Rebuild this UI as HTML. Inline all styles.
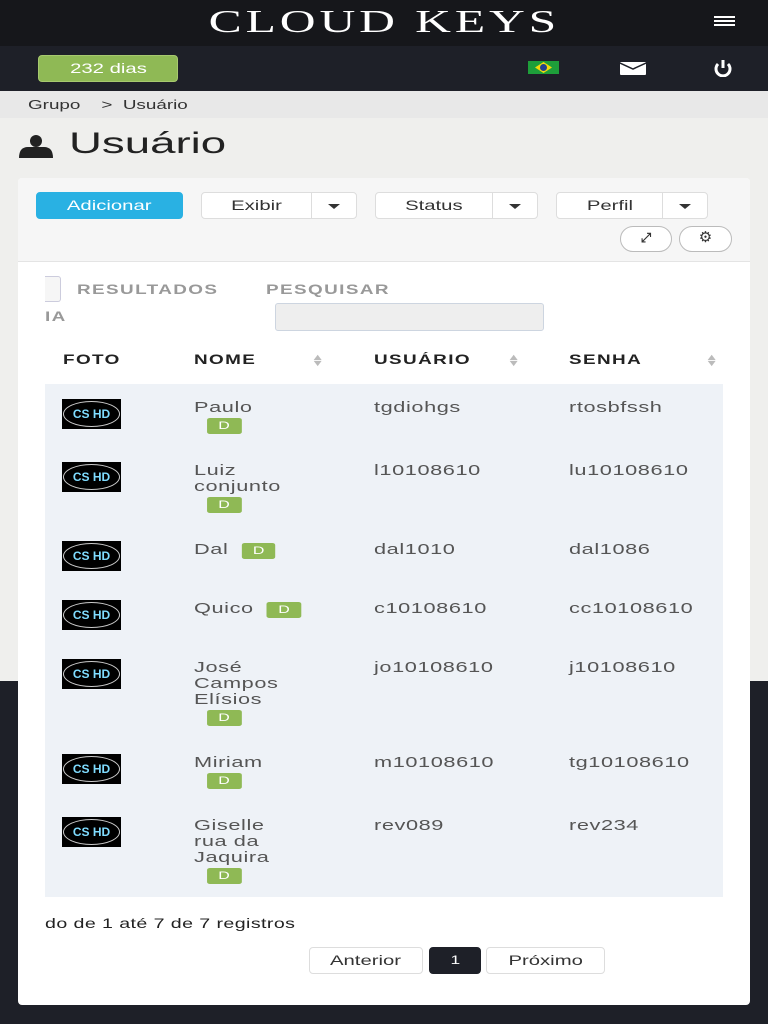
<!DOCTYPE html>
<html><head><meta charset="utf-8"><style>
*{margin:0;padding:0;box-sizing:border-box}
body{width:768px;height:1024px;position:relative;overflow:hidden;background:#1e2028;font-family:"Liberation Sans",sans-serif}
.a{position:absolute}
.sx{transform:scaleX(1.45);transform-origin:0 0}
.sc{display:inline-block;transform:scaleX(1.45);transform-origin:50% 50%}
.top{left:0;top:0;width:768px;height:46px;background:#16171b}
.logo{left:0;width:768px;top:3px;text-align:center;color:#fff;font-family:"Liberation Serif",serif;font-size:32px;letter-spacing:2.5px}
.bar2{top:46px;left:0;width:768px;height:45px;background:#1e2028}
.light{top:91px;left:0;width:768px;height:590px;background:#efefed}
.crumbbg{top:91px;left:0;width:768px;height:27px;background:#e8e8e8}
.card{left:18px;top:178px;width:732px;height:827px;background:#fff;border-radius:4px}
.cardh{left:18px;top:178px;width:732px;height:84px;background:#f6f6f6;border-bottom:1px solid #e4e4e4;border-radius:4px 4px 0 0}
.btn{border:1px solid #ddd;background:#fff;border-radius:4px;font-size:14px;color:#333;text-align:center;line-height:25px;height:27px}
.car{width:0;height:0;border-left:6px solid transparent;border-right:6px solid transparent;border-top:5px solid #333;display:inline-block;vertical-align:middle}
.th{font-size:13.5px;font-weight:bold;color:#222;letter-spacing:1px;top:352px;transform:scaleX(1.4);transform-origin:0 0}
.sort{top:354px;color:#bbb;font-size:9px;line-height:6px;transform:scaleX(1.5);transform-origin:0 0}
.t{font-size:15px;color:#555;letter-spacing:.4px;line-height:16px;transform:scaleX(1.45);transform-origin:0 0}
.b{display:inline-block;background:#8fb955;color:#fff;font-size:11px;width:23.5px;height:16px;line-height:16px;text-align:center;border-radius:2px;letter-spacing:0}
.lg{width:59px;height:30px;background:#000}
.lg div{position:absolute;left:1px;top:2px;width:57px;height:26px;border:1px solid #ccc;border-radius:50%;color:#7fdcff;font-weight:bold;font-size:12px;text-align:center;line-height:24px}
</style></head><body>
<div class="a top"></div>
<div class="a logo"><span class="sc" style="transform:scaleX(1.55)">CLOUD KEYS</span></div>
<div class="a" style="left:714px;top:16px;width:21px;height:2px;background:#fff;box-shadow:0 4px 0 #fff,0 8px 0 #fff"></div>
<div class="a bar2"></div>
<div class="a" style="left:38px;top:55px;width:140px;height:27px;background:#8fb955;border:1px solid #a7c96f;border-radius:4px;color:#fff;font-size:14px;text-align:center;line-height:25px"><span class="sc">232 dias</span></div>
<div class="a" style="left:528px;top:61px;width:31px;height:13px;background:#1e9e3a"><div class="a" style="left:7px;top:1px;width:17px;height:11px;background:#f4d90c;clip-path:polygon(50% 0,100% 50%,50% 100%,0 50%)"></div><div class="a" style="left:12px;top:3px;width:7px;height:7px;border-radius:50%;background:#23408f"></div></div>
<svg class="a" style="left:620px;top:62px" width="26" height="13" viewBox="0 0 26 13"><rect width="26" height="13" rx="1" fill="#fff"/><path d="M0 1 L13 7 L26 1" stroke="#1e2028" stroke-width="1.5" fill="none"/></svg>
<svg class="a" style="left:712px;top:59px" width="22" height="18" viewBox="0 0 22 18"><path d="M6 5 A7 7 0 1 0 16 5" stroke="#fff" stroke-width="3" fill="none"/><rect x="9.5" y="1" width="3" height="8" fill="#fff"/></svg>
<div class="a light"></div>
<div class="a crumbbg"></div>
<div class="a sx" style="left:28px;top:97px;font-size:13px;color:#333;white-space:nowrap">Grupo &nbsp;&nbsp;&nbsp;&gt; &nbsp;Usuário</div>
<svg class="a" style="left:18px;top:135px" width="38" height="23" viewBox="0 0 38 23"><circle cx="18" cy="6" r="6" fill="#222"/><path d="M1 23 Q1 12 10 12 L26 12 Q35 12 35 23 Z" fill="#222"/></svg>
<div class="a sx" style="left:69px;top:127px;font-size:30px;color:#222;transform:scaleX(1.52)">Usuário</div>
<div class="a card"></div>
<div class="a cardh"></div>
<div class="a btn" style="left:36px;top:192px;width:147px;background:#29b1e3;border-color:#29b1e3;color:#fff"><span class="sc">Adicionar</span></div>
<div class="a btn" style="left:201px;top:192px;width:111px;border-radius:4px 0 0 4px"><span class="sc">Exibir</span></div>
<div class="a btn" style="left:311px;top:192px;width:46px;border-radius:0 4px 4px 0"><span class="car"></span></div>
<div class="a btn" style="left:375px;top:192px;width:118px;border-radius:4px 0 0 4px"><span class="sc">Status</span></div>
<div class="a btn" style="left:492px;top:192px;width:46px;border-radius:0 4px 4px 0"><span class="car"></span></div>
<div class="a btn" style="left:556px;top:192px;width:107px;border-radius:4px 0 0 4px"><span class="sc">Perfil</span></div>
<div class="a btn" style="left:662px;top:192px;width:46px;border-radius:0 4px 4px 0"><span class="car"></span></div>
<div class="a btn" style="left:620px;top:226px;width:52px;height:26px;border-radius:13px;border-color:#bbb;font-size:13px;line-height:22px;font-weight:bold">⤢</div>
<div class="a btn" style="left:679px;top:226px;width:53px;height:26px;border-radius:13px;border-color:#bbb;font-size:15px;line-height:22px">⚙</div>
<div class="a" style="left:45px;top:276px;width:16px;height:26px;border:1px solid #ccd;border-left:none;border-radius:0 3px 3px 0;background:#f6f6f6"></div>
<div class="a th" style="left:77px;top:282px;color:#999">RESULTADOS</div>
<div class="a th" style="left:266px;top:282px;color:#999">PESQUISAR</div>
<div class="a th" style="left:45px;top:309px;color:#999">IA</div>
<div class="a" style="left:275px;top:303px;width:269px;height:28px;background:#eee;border:1px solid #cdd5e0;border-radius:3px"></div>
<div class="a th" style="left:63px">FOTO</div>
<div class="a th" style="left:194px">NOME</div>
<div class="a th" style="left:374px">USUÁRIO</div>
<div class="a th" style="left:569px">SENHA</div>
<div class="a sort" style="left:311px">▲<br>▼</div>
<div class="a sort" style="left:507px">▲<br>▼</div>
<div class="a sort" style="left:705px">▲<br>▼</div>
<div class="a" style="left:45px;top:384px;width:678px;height:513px;background:#eef2f7"></div>

<div class="a lg" style="left:62px;top:399px"><div>CS HD</div></div>
<div class="a t" style="left:194px;top:400px">Paulo<br><span class="b" style="margin:2px 0 0 9px">D</span></div>
<div class="a t" style="left:374px;top:400px">tgdiohgs</div><div class="a t" style="left:569px;top:400px">rtosbfssh</div>

<div class="a lg" style="left:62px;top:462px"><div>CS HD</div></div>
<div class="a t" style="left:194px;top:463px">Luiz<br>conjunto<br><span class="b" style="margin:2px 0 0 9px">D</span></div>
<div class="a t" style="left:374px;top:463px">l10108610</div><div class="a t" style="left:569px;top:463px">lu10108610</div>

<div class="a lg" style="left:62px;top:541px"><div>CS HD</div></div>
<div class="a t" style="left:194px;top:542px">Dal &nbsp;<span class="b">D</span></div>
<div class="a t" style="left:374px;top:542px">dal1010</div><div class="a t" style="left:569px;top:542px">dal1086</div>

<div class="a lg" style="left:62px;top:600px"><div>CS HD</div></div>
<div class="a t" style="left:194px;top:601px">Quico &nbsp;<span class="b">D</span></div>
<div class="a t" style="left:374px;top:601px">c10108610</div><div class="a t" style="left:569px;top:601px">cc10108610</div>

<div class="a lg" style="left:62px;top:659px"><div>CS HD</div></div>
<div class="a t" style="left:194px;top:660px">José<br>Campos<br>Elísios<br><span class="b" style="margin:2px 0 0 9px">D</span></div>
<div class="a t" style="left:374px;top:660px">jo10108610</div><div class="a t" style="left:569px;top:660px">j10108610</div>

<div class="a lg" style="left:62px;top:754px"><div>CS HD</div></div>
<div class="a t" style="left:194px;top:755px">Miriam<br><span class="b" style="margin:2px 0 0 9px">D</span></div>
<div class="a t" style="left:374px;top:755px">m10108610</div><div class="a t" style="left:569px;top:755px">tg10108610</div>

<div class="a lg" style="left:62px;top:817px"><div>CS HD</div></div>
<div class="a t" style="left:194px;top:818px">Giselle<br>rua da<br>Jaquira<br><span class="b" style="margin:2px 0 0 9px">D</span></div>
<div class="a t" style="left:374px;top:818px">rev089</div><div class="a t" style="left:569px;top:818px">rev234</div>

<div class="a sx" style="left:45px;top:915px;font-size:14px;color:#222;letter-spacing:.3px;white-space:nowrap;transform:scaleX(1.4)">do de 1 até 7 de 7 registros</div>
<div class="a btn" style="left:309px;top:947px;width:114px"><span class="sc">Anterior</span></div>
<div class="a btn" style="left:429px;top:947px;width:52px;background:#1e2028;border-color:#1e2028;color:#fff;font-size:12px"><span class="sc">1</span></div>
<div class="a btn" style="left:486px;top:947px;width:119px"><span class="sc">Próximo</span></div>
</body></html>
